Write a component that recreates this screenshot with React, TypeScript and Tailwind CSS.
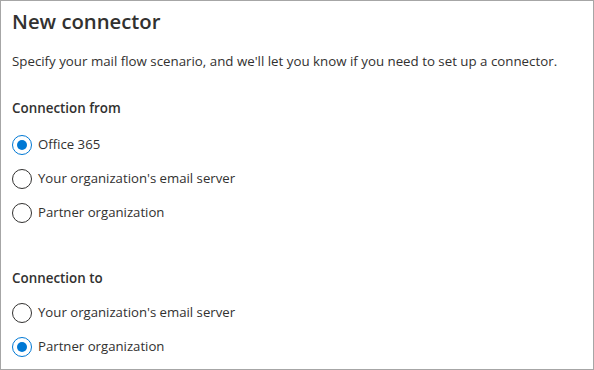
import React from "react";

const font = { fontFamily: '"Segoe UI", "Open Sans", "Noto Sans", sans-serif' };

function Radio({ label, checked }: { label: string; checked?: boolean }) {
  return (
    <label className="flex h-[34px] items-center gap-[6px]">
      <span
        className={
          "flex h-[20px] w-[20px] shrink-0 items-center justify-center rounded-full border " +
          (checked ? "border-[#0078d4]" : "border-[#323130]")
        }
      >
        {checked && <span className="h-[10px] w-[10px] rounded-full bg-[#0078d4]" />}
      </span>
      <span className="text-[13.2px] text-[#323130]">{label}</span>
    </label>
  );
}

export default function App() {
  return (
    <div
      className="h-[370px] w-[594px] border border-[#a6a6a6] bg-white pl-[11px] text-[#323130]"
      style={font}
    >
      <h1 className="pt-[6px] text-[20.3px] font-semibold leading-[28px]">New connector</h1>
      <p className="mt-[16px] text-[13.3px] leading-[20px]">
        Specify your mail flow scenario, and we'll let you know if you need to set up a connector.
      </p>

      {/* Connection from */}
      <h2 className="mt-[27px] text-[13.4px] font-semibold leading-[20px]">Connection from</h2>
      <div className="mt-[10px] flex flex-col">
        <Radio label="Office 365" checked />
        <Radio label="Your organization's email server" />
        <Radio label="Partner organization" />
      </div>

      {/* Connection to */}
      <h2 className="mt-[38px] text-[13.4px] font-semibold leading-[20px]">Connection to</h2>
      <div className="mt-[8px] flex flex-col">
        <Radio label="Your organization's email server" />
        <Radio label="Partner organization" checked />
      </div>
    </div>
  );
}
